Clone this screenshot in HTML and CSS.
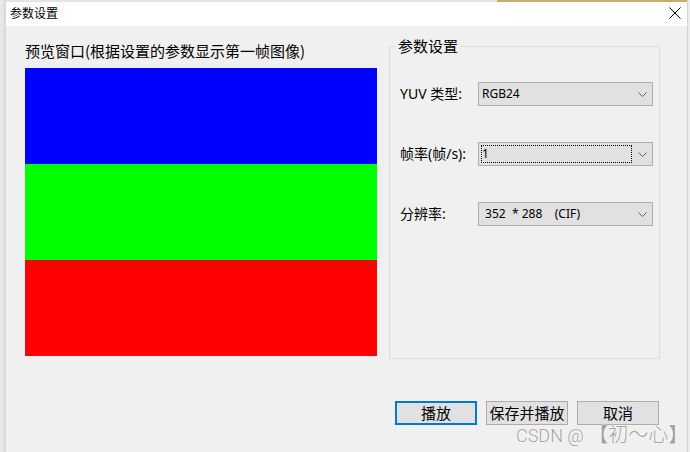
FILE: index.html
```html
<!DOCTYPE html>
<html lang="zh-CN">
<head>
<meta charset="utf-8">
<title>参数设置</title>
<link rel="stylesheet" href="styles.css">
</head>
<body>
<div class="screen">
  <div class="desk-left"></div>
  <div class="window">
    <div class="topstrip"></div>
    <div class="titlebar">
      <span class="title">参数设置</span>
      <svg class="close" width="12" height="12" viewBox="0 0 12 12"><path d="M0.5 0.5 L11.5 11.5 M11.5 0.5 L0.5 11.5" stroke="#000" stroke-width="1" fill="none"/></svg>
    </div>
    <div class="client">
      <div class="preview-col">
        <div class="preview-label">预览窗口(根据设置的参数显示第一帧图像)</div>
        <div class="preview">
          <div class="band blue"></div>
          <div class="band green"></div>
          <div class="band red"></div>
        </div>
      </div>
      <fieldset class="group">
        <legend class="group-title">参数设置</legend>
        <div class="row">
          <span class="label">YUV 类型:</span>
          <div class="combo">
            <span class="value">RGB24</span>
            <span class="arrow"><svg width="9" height="5" viewBox="0 0 9 5"><polyline points="0.5,0.5 4.5,4.5 8.5,0.5" stroke="#606060" stroke-width="1" fill="none"/></svg></span>
          </div>
        </div>
        <div class="row">
          <span class="label">帧率(帧/s):</span>
          <div class="combo focused">
            <span class="value">1</span>
            <span class="arrow"><svg width="9" height="5" viewBox="0 0 9 5"><polyline points="0.5,0.5 4.5,4.5 8.5,0.5" stroke="#606060" stroke-width="1" fill="none"/></svg></span>
          </div>
        </div>
        <div class="row">
          <span class="label">分辨率:</span>
          <div class="combo">
            <span class="value"> 352  * 288    (CIF)</span>
            <span class="arrow"><svg width="9" height="5" viewBox="0 0 9 5"><polyline points="0.5,0.5 4.5,4.5 8.5,0.5" stroke="#606060" stroke-width="1" fill="none"/></svg></span>
          </div>
        </div>
      </fieldset>
      <div class="buttons">
        <button class="btn default">播放</button>
        <button class="btn">保存并播放</button>
        <button class="btn">取消</button>
      </div>
    </div>
  </div>
  <div class="desk-right"></div>
  <div class="watermark"><span class="wm-latin">CSDN @ </span>【初～心】</div>
</div>
</body>
</html>
```

FILE: styles.css
```css
html, body {
  margin: 0;
  padding: 0;
}
body {
  width: 690px;
  height: 452px;
  overflow: hidden;
  background: #f0f0f0;
  font-family: "Noto Sans CJK SC", "Noto Sans", sans-serif;
  color: #000;
}
.screen {
  position: relative;
  display: flex;
  width: 690px;
  height: 452px;
  overflow: hidden;
}
.desk-left {
  width: 6px;
  flex: none;
  background: linear-gradient(to right, #e8e8e8 0, #e6e6e6 3px, #d6d6d6 5px, #dcdcdc 6px);
}
.window {
  width: 681px;
  flex: none;
  display: flex;
  flex-direction: column;
  border-right: 1px solid #d4d4d4;
}
.desk-right {
  flex: 1;
  background: #ececec;
}
.topstrip {
  height: 2px;
  background: linear-gradient(to right, #e4e4e4 0, #e4e4e4 491px, #c9ab6e 491px);
}
.titlebar {
  height: 24px;
  background: #fff;
  display: flex;
  align-items: center;
  justify-content: space-between;
  padding: 0 6px 0 4px;
}
.title {
  font-size: 12px;
  line-height: 16px;
  margin-top: -2px;
}
.close {
  display: block;
  margin-top: -2px;
}
.client {
  flex: 1;
  background: #f0f0f0;
  display: grid;
  grid-template-columns: 352px 271px;
  column-gap: 12px;
  align-items: start;
  align-content: start;
  padding: 11px 0 0 19px;
}
.preview-label {
  margin-top: 4px;
  margin-bottom: 7px;
  font-size: 15px;
  line-height: 20px;
  white-space: nowrap;
}
.preview {
  width: 352px;
  height: 288px;
  display: flex;
  flex-direction: column;
}
.band {
  height: 96px;
}
.blue { background: #0000ff; }
.green { background: #00ff00; }
.red { background: #ff0000; }

.group {
  margin: 0;
  padding: 27px 0 0 10px;
  min-width: 0;
  box-sizing: border-box;
  height: 322px;
  border: 1px solid #dcdcdc;
  display: flex;
  flex-direction: column;
  gap: 36px;
}
.group-title {
  margin-left: -4px;
  padding: 0 2px;
  font-size: 15px;
  line-height: 18px;
  margin-top: -1px;
}
.row {
  display: flex;
  align-items: center;
  height: 24px;
}
.label {
  width: 78px;
  flex: none;
  font-size: 14px;
  line-height: 18px;
  white-space: nowrap;
  font-family: "Noto Sans", "Noto Sans CJK SC", sans-serif;
}
.combo {
  width: 175px;
  height: 24px;
  box-sizing: border-box;
  border: 1px solid #adadad;
  background: #e1e1e1;
  display: flex;
  align-items: stretch;
}
.value {
  flex: 1;
  margin: 2px 0 2px 2px;
  border: 1px dotted transparent;
  font-size: 12px;
  line-height: 16px;
  white-space: pre;
  font-family: "Noto Sans", "Noto Sans CJK SC", sans-serif;
  display: flex;
  align-items: center;
}
.combo.focused .value {
  border-color: #000;
}
.arrow {
  width: 20px;
  flex: none;
  display: flex;
  align-items: center;
  justify-content: center;
}
.arrow svg {
  display: block;
}
.buttons {
  grid-column: 2;
  display: flex;
  gap: 9px;
  margin-top: 42px;
  padding-left: 6px;
}
.btn {
  width: 82px;
  height: 24px;
  box-sizing: border-box;
  border: 1px solid #adadad;
  background: #e1e1e1;
  font-family: "Noto Sans CJK SC", sans-serif;
  font-size: 15px;
  line-height: 18px;
  padding: 0;
  color: #000;
  border-radius: 0;
}
.btn.default {
  border: 2px solid #0078d7;
}
.watermark {
  position: absolute;
  left: 516px;
  top: 425px;
  font-family: "Noto Sans CJK SC", sans-serif;
  font-size: 20px;
  font-weight: 300;
  line-height: 18px;
  color: #a2a2a2;
  text-shadow: 0 0 2px #fff, 0 0 1px #fff;
  white-space: pre;
}
.wm-latin {
  font-family: Roboto, "Liberation Sans", sans-serif;
  font-size: 18px;
  font-weight: 300;
}
```
